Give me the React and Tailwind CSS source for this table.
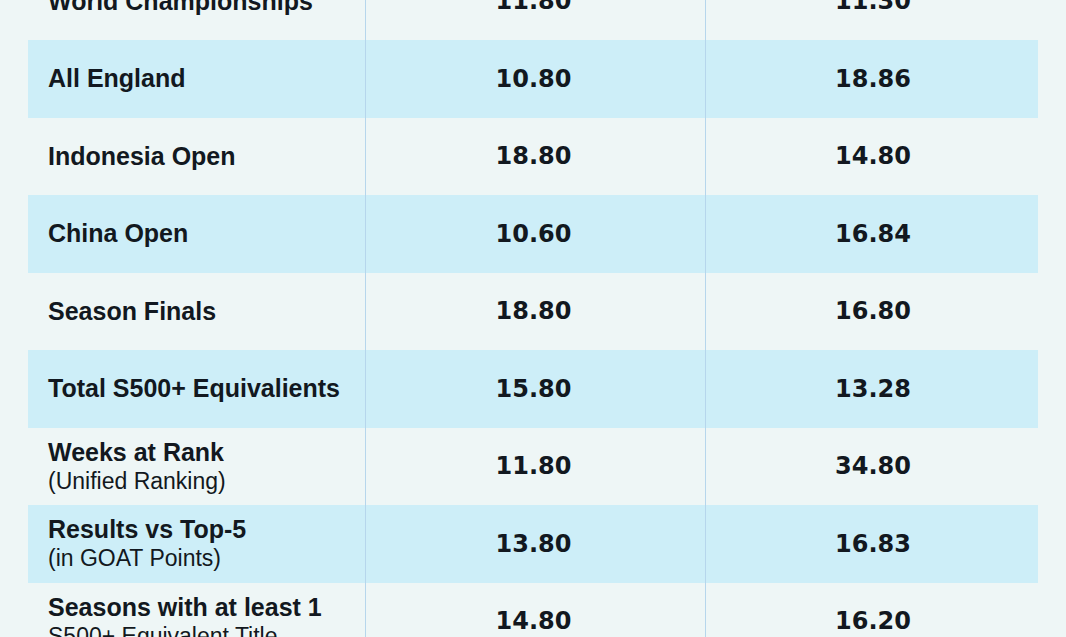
const rows = [
  { label: 'World Championships', a: '11.80', b: '11.30' },
  { label: 'All England', a: '10.80', b: '18.86' },
  { label: 'Indonesia Open', a: '18.80', b: '14.80' },
  { label: 'China Open', a: '10.60', b: '16.84' },
  { label: 'Season Finals', a: '18.80', b: '16.80' },
  { label: 'Total S500+ Equivalients', a: '15.80', b: '13.28' },
  { label: 'Weeks at Rank', sub: '(Unified Ranking)', a: '11.80', b: '34.80' },
  { label: 'Results vs Top-5', sub: '(in GOAT Points)', a: '13.80', b: '16.83' },
  { label: 'Seasons with at least 1', sub: 'S500+ Equivalent Title', a: '14.80', b: '16.20' },
]

function Row({ row, shaded }) {
  return (
    <div
      className={`grid grid-cols-[337px_340px_333px] h-[77.5px] shrink-0 ${
        shaded ? 'bg-[#cdeef8]' : 'bg-transparent'
      }`}
    >
      <div className="flex flex-col justify-center pl-5 text-[#121820]">
        <span className="font-bold text-[25px] leading-[29px] whitespace-nowrap">{row.label}</span>
        {row.sub && (
          <span className="text-[23px] leading-[28px] whitespace-nowrap">{row.sub}</span>
        )}
      </div>
      <div className="flex items-center justify-center border-l-[1.5px] border-[#b6d6ec]">
        <span className="font-['DejaVu_Sans',sans-serif] font-bold text-[24px] text-[#121820] pr-[4px]">
          {row.a}
        </span>
      </div>
      <div className="flex items-center justify-center border-l-[1.5px] border-[#b6d6ec]">
        <span className="font-['DejaVu_Sans',sans-serif] font-bold text-[24px] text-[#121820] pl-[2px]">
          {row.b}
        </span>
      </div>
    </div>
  )
}

export default function App() {
  return (
    <div className="w-[1066px] h-[637px] overflow-hidden bg-[#eef6f6] font-['Liberation_Sans',Arial,sans-serif]">
      <div className="flex flex-col ml-[28px] w-[1010px] -mt-[37.5px]">
        {rows.map((row, i) => (
          <Row key={row.label} row={row} shaded={i % 2 === 1} />
        ))}
      </div>
    </div>
  )
}
